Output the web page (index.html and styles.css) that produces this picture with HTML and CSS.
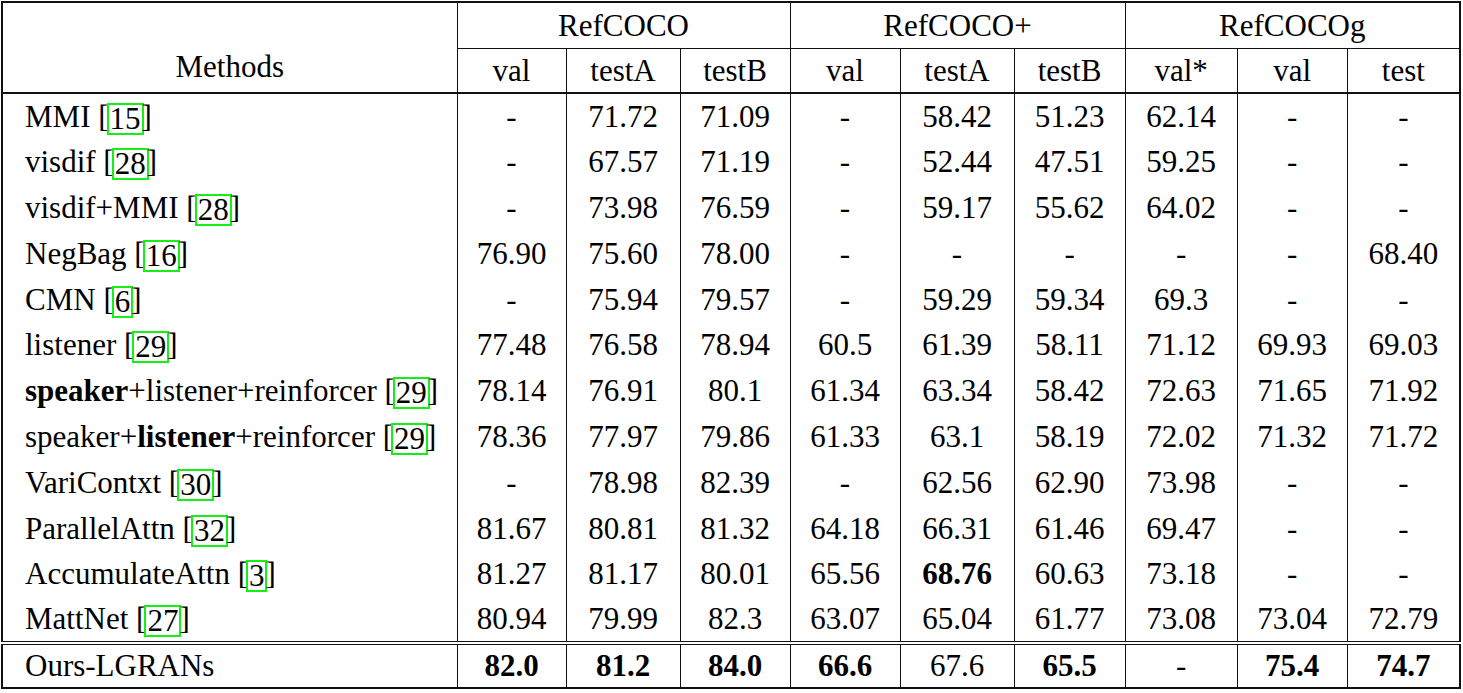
FILE: index.html
```html
<!DOCTYPE html>
<html>
<head>
<meta charset="utf-8">
<link rel="stylesheet" href="styles.css">
</head>
<body>
<table class="results">
  <colgroup>
    <col class="c-method">
    <col class="c109"><col class="c114"><col class="c110">
    <col class="c110"><col class="c114"><col class="c111">
    <col class="c112"><col class="c110"><col class="c113">
  </colgroup>
  <thead>
    <tr class="h1">
      <th rowspan="2" class="methods-h">Methods</th>
      <th colspan="3">RefCOCO</th>
      <th colspan="3">RefCOCO+</th>
      <th colspan="3">RefCOCOg</th>
    </tr>
    <tr class="h2">
      <th>val</th><th>testA</th><th>testB</th>
      <th>val</th><th>testA</th><th>testB</th>
      <th>val*</th><th>val</th><th>test</th>
    </tr>
  </thead>
  <tbody>
    <tr><td class="m">MMI [<span class="cite">15</span>]</td><td>-</td><td>71.72</td><td>71.09</td><td>-</td><td>58.42</td><td>51.23</td><td>62.14</td><td>-</td><td>-</td></tr>
    <tr><td class="m">visdif [<span class="cite">28</span>]</td><td>-</td><td>67.57</td><td>71.19</td><td>-</td><td>52.44</td><td>47.51</td><td>59.25</td><td>-</td><td>-</td></tr>
    <tr><td class="m">visdif+MMI [<span class="cite">28</span>]</td><td>-</td><td>73.98</td><td>76.59</td><td>-</td><td>59.17</td><td>55.62</td><td>64.02</td><td>-</td><td>-</td></tr>
    <tr><td class="m">NegBag [<span class="cite">16</span>]</td><td>76.90</td><td>75.60</td><td>78.00</td><td>-</td><td>-</td><td>-</td><td>-</td><td>-</td><td>68.40</td></tr>
    <tr><td class="m">CMN [<span class="cite">6</span>]</td><td>-</td><td>75.94</td><td>79.57</td><td>-</td><td>59.29</td><td>59.34</td><td>69.3</td><td>-</td><td>-</td></tr>
    <tr><td class="m">listener [<span class="cite">29</span>]</td><td>77.48</td><td>76.58</td><td>78.94</td><td>60.5</td><td>61.39</td><td>58.11</td><td>71.12</td><td>69.93</td><td>69.03</td></tr>
    <tr><td class="m"><b>speaker</b>+listener+reinforcer [<span class="cite">29</span>]</td><td>78.14</td><td>76.91</td><td>80.1</td><td>61.34</td><td>63.34</td><td>58.42</td><td>72.63</td><td>71.65</td><td>71.92</td></tr>
    <tr><td class="m">speaker+<b>listener</b>+reinforcer [<span class="cite">29</span>]</td><td>78.36</td><td>77.97</td><td>79.86</td><td>61.33</td><td>63.1</td><td>58.19</td><td>72.02</td><td>71.32</td><td>71.72</td></tr>
    <tr><td class="m">VariContxt [<span class="cite">30</span>]</td><td>-</td><td>78.98</td><td>82.39</td><td>-</td><td>62.56</td><td>62.90</td><td>73.98</td><td>-</td><td>-</td></tr>
    <tr><td class="m">ParallelAttn [<span class="cite">32</span>]</td><td>81.67</td><td>80.81</td><td>81.32</td><td>64.18</td><td>66.31</td><td>61.46</td><td>69.47</td><td>-</td><td>-</td></tr>
    <tr><td class="m">AccumulateAttn [<span class="cite">3</span>]</td><td>81.27</td><td>81.17</td><td>80.01</td><td>65.56</td><td><b>68.76</b></td><td>60.63</td><td>73.18</td><td>-</td><td>-</td></tr>
    <tr><td class="m">MattNet [<span class="cite">27</span>]</td><td>80.94</td><td>79.99</td><td>82.3</td><td>63.07</td><td>65.04</td><td>61.77</td><td>73.08</td><td>73.04</td><td>72.79</td></tr>
    <tr class="ours"><td class="m">Ours-LGRANs</td><td><b>82.0</b></td><td><b>81.2</b></td><td><b>84.0</b></td><td><b>66.6</b></td><td>67.6</td><td><b>65.5</b></td><td>-</td><td><b>75.4</b></td><td><b>74.7</b></td></tr>
  </tbody>
</table>
</body>
</html>
```

FILE: styles.css
```css
html, body {
  margin: 0;
  padding: 0;
  background: #fff;
}

body {
  padding: 1px 0 0 1px;
  font-family: "Liberation Serif", "Times New Roman", serif;
  color: #000;
}

.results {
  border-collapse: collapse;
  table-layout: fixed;
  width: 1460px;
  font-size: 31px;
  border: 2px solid #111;
}

.c-method { width: 455px; }
.c109 { width: 109px; }
.c110 { width: 110px; }
.c111 { width: 111px; }
.c112 { width: 112px; }
.c113 { width: 113px; }
.c114 { width: 114px; }

.results th,
.results td {
  border-left: 1px solid #111;
  border-right: 1px solid #111;
  padding: 0;
  text-align: center;
  vertical-align: middle;
  font-weight: normal;
  line-height: 1;
  white-space: nowrap;
}

.results th {
  border-bottom: 1px solid #111;
}

.h1 { height: 46px; }
.h2 { height: 45px; }

.h2 th {
  border-bottom: 2px solid #111;
}

.methods-h {
  vertical-align: bottom !important;
  padding-bottom: 10px !important;
  border-bottom: 2px solid #111 !important;
}

.results tbody tr {
  height: 45.8px;
}

.results td.m {
  text-align: left;
  padding-left: 22px;
}

.results b {
  font-weight: bold;
}

.results tr.ours {
  height: 45px;
}

.results tr.ours td {
  border-top: 4px double #111;
}

.cite {
  display: inline-block;
  line-height: 26px;
  height: 26px;
  outline: 2px solid #16ee16;
  outline-offset: 1px;
  padding: 0;
  margin: 0 1px;
  vertical-align: -2px;
}
```
